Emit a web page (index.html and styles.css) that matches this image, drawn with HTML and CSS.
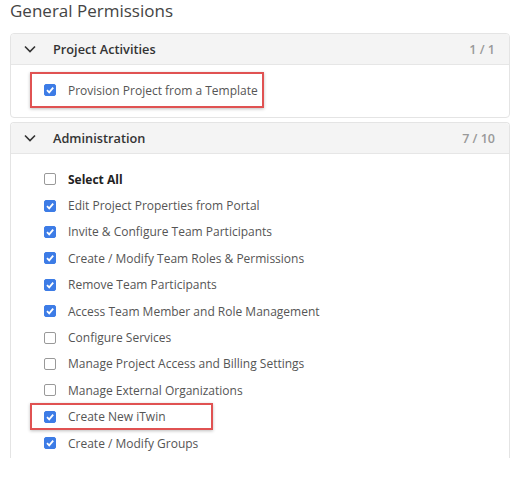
FILE: index.html
```html
<!DOCTYPE html>
<html>
<head>
    <title>General Permissions</title>
    <link rel="stylesheet" href="styles.css">
</head>
<body>
    <h2 class="page-title">General Permissions</h2>

    <!-- Project Activities -->
    <div class="panel">
        <div class="panel-header">
            <svg class="chevron" width="12" height="8" viewBox="0 0 12 8"><polyline points="1,1.5 6,6.5 11,1.5" fill="none" stroke="#333" stroke-width="1.6"/></svg>
            <span class="panel-title">Project Activities</span>
            <span class="panel-count">1 / 1</span>
        </div>
        <div class="panel-body first-body">
            <div class="highlight-box big">
                <div class="row">
                    <span class="box checked"><svg width="12" height="12" viewBox="0 0 12 12"><polyline points="3,6.2 5.2,8.4 9.2,3.6" fill="none" stroke="#fff" stroke-width="1.8"/></svg></span>
                    <span class="label">Provision Project from a Template</span>
                </div>
            </div>
        </div>
    </div>

    <!-- Administration -->
    <div class="panel last">
        <div class="panel-header">
            <svg class="chevron" width="12" height="8" viewBox="0 0 12 8"><polyline points="1,1.5 6,6.5 11,1.5" fill="none" stroke="#333" stroke-width="1.6"/></svg>
            <span class="panel-title">Administration</span>
            <span class="panel-count">7 / 10</span>
        </div>
        <div class="panel-body list-body">
            <div class="row item">
                <span class="box"></span>
                <span class="label bold">Select All</span>
            </div>
            <div class="row item">
                <span class="box checked"><svg width="12" height="12" viewBox="0 0 12 12"><polyline points="3,6.2 5.2,8.4 9.2,3.6" fill="none" stroke="#fff" stroke-width="1.8"/></svg></span>
                <span class="label">Edit Project Properties from Portal</span>
            </div>
            <div class="row item">
                <span class="box checked"><svg width="12" height="12" viewBox="0 0 12 12"><polyline points="3,6.2 5.2,8.4 9.2,3.6" fill="none" stroke="#fff" stroke-width="1.8"/></svg></span>
                <span class="label">Invite &amp; Configure Team Participants</span>
            </div>
            <div class="row item">
                <span class="box checked"><svg width="12" height="12" viewBox="0 0 12 12"><polyline points="3,6.2 5.2,8.4 9.2,3.6" fill="none" stroke="#fff" stroke-width="1.8"/></svg></span>
                <span class="label">Create / Modify Team Roles &amp; Permissions</span>
            </div>
            <div class="row item">
                <span class="box checked"><svg width="12" height="12" viewBox="0 0 12 12"><polyline points="3,6.2 5.2,8.4 9.2,3.6" fill="none" stroke="#fff" stroke-width="1.8"/></svg></span>
                <span class="label">Remove Team Participants</span>
            </div>
            <div class="row item">
                <span class="box checked"><svg width="12" height="12" viewBox="0 0 12 12"><polyline points="3,6.2 5.2,8.4 9.2,3.6" fill="none" stroke="#fff" stroke-width="1.8"/></svg></span>
                <span class="label">Access Team Member and Role Management</span>
            </div>
            <div class="row item">
                <span class="box"></span>
                <span class="label">Configure Services</span>
            </div>
            <div class="row item">
                <span class="box"></span>
                <span class="label">Manage Project Access and Billing Settings</span>
            </div>
            <div class="row item">
                <span class="box"></span>
                <span class="label">Manage External Organizations</span>
            </div>
            <div class="highlight-box small">
                <div class="row item">
                    <span class="box checked"><svg width="12" height="12" viewBox="0 0 12 12"><polyline points="3,6.2 5.2,8.4 9.2,3.6" fill="none" stroke="#fff" stroke-width="1.8"/></svg></span>
                    <span class="label">Create New iTwin</span>
                </div>
            </div>
            <div class="row item">
                <span class="box checked"><svg width="12" height="12" viewBox="0 0 12 12"><polyline points="3,6.2 5.2,8.4 9.2,3.6" fill="none" stroke="#fff" stroke-width="1.8"/></svg></span>
                <span class="label">Create / Modify Groups</span>
            </div>
        </div>
    </div>
</body>
</html>
```

FILE: styles.css
```css
body {
    font-family: "Open Sans", Arial, sans-serif;
    margin: 0;
    padding: 0;
    background: #fff;
    color: #555;
}
.page-title {
    font-size: 17px;
    font-weight: normal;
    line-height: 22px;
    color: #444;
    margin: 0 0 11px 10px;
}
/* Paneles */
.panel {
    margin: 0 7px 4px 10px;
    border: 1px solid #e4e4e4;
    border-radius: 4px;
}
.panel.last {
    border-bottom: none;
    border-radius: 4px 4px 0 0;
}
.panel-header {
    display: flex;
    align-items: center;
    height: 30px;
    padding: 0 14px 0 13px;
    background-color: #f4f4f4;
    border-bottom: 1px solid #e6e6e6;
    border-radius: 4px 4px 0 0;
}
.chevron {
    margin-right: 17px;
}
.panel-title {
    font-size: 12.75px;
    font-weight: 600;
    color: #333;
}
.panel-count {
    margin-left: auto;
    font-size: 12.5px;
    font-weight: 600;
    color: #999;
}
.first-body {
    padding: 7px 0 9px 0;
}
.list-body {
    padding: 12px 0 2px 0;
}
.row {
    display: flex;
    align-items: center;
    padding-left: 33px;
}
.item {
    height: 26.4px;
}
.highlight-box {
    border: 2px solid #e05252;
    box-shadow: 0 1px 3px rgba(0, 0, 0, 0.25);
    margin-left: 19px;
}
.highlight-box .row {
    padding-left: 12px;
}
.highlight-box.big {
    width: 230px;
    height: 32px;
    display: flex;
    align-items: center;
}
.highlight-box.small {
    width: 179px;
    margin-top: -0.5px;
    margin-bottom: -0.5px;
}
.highlight-box.small .item {
    height: 23.4px;
}
.box {
    width: 10px;
    height: 10px;
    border: 1px solid #999;
    border-radius: 2px;
    flex-shrink: 0;
    display: flex;
    align-items: center;
    justify-content: center;
}
.box.checked {
    background-color: #3d7ce6;
    border-color: #3d7ce6;
}
.box svg {
    flex-shrink: 0;
}
.label {
    margin-left: 12px;
    font-size: 12px;
    color: #555;
    white-space: nowrap;
}
.label.bold {
    font-weight: 700;
    color: #222;
}
```
